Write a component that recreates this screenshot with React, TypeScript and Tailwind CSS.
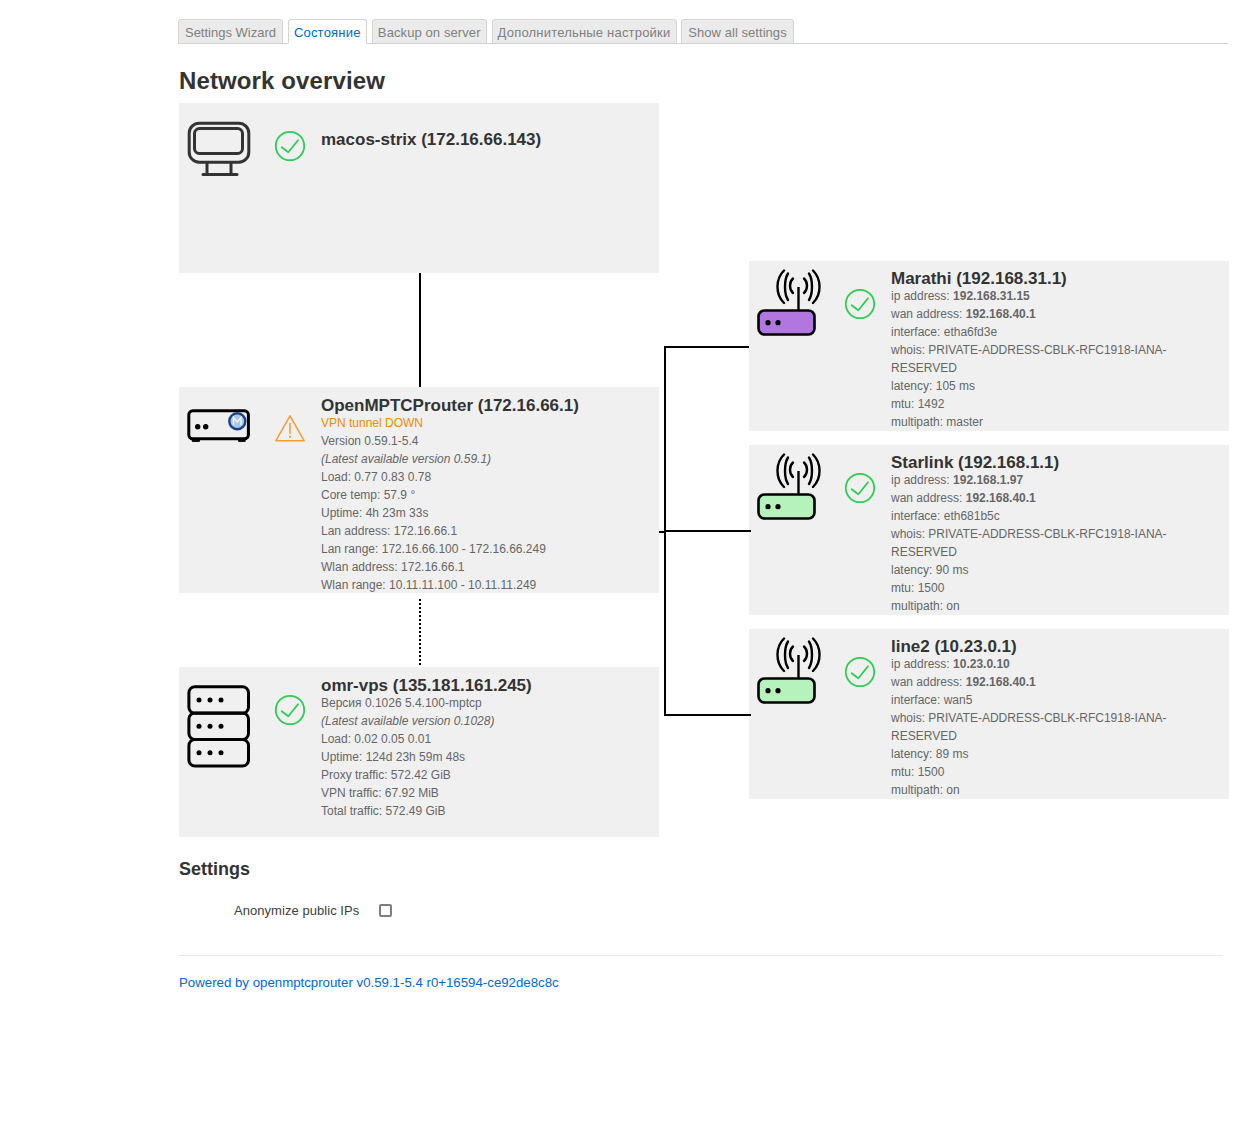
const font = { fontFamily: '"Liberation Sans", Arial, sans-serif' };

const tabs = [
  { label: "Settings Wizard", w: "w-[105px]" },
  { label: "Состояние", w: "w-[79.5px] tracking-[0.2px]", active: true },
  { label: "Backup on server", w: "w-[115.5px] tracking-[0.1px]" },
  { label: "Дополнительные настройки", w: "w-[185px] tracking-[0.2px]" },
  { label: "Show all settings", w: "w-[113px] tracking-[0.05px]" },
];

function CheckIcon() {
  return (
    <svg width="32" height="32" viewBox="0 0 32 32" fill="none" stroke="#2ecc55" strokeWidth="1.8" strokeLinecap="round" strokeLinejoin="round">
      <circle cx="16" cy="16" r="14.2" />
      <path d="M7.7 17.3 L14.3 22.3 L24 10.3" />
    </svg>
  );
}

function WarnIcon() {
  return (
    <svg width="32" height="32" viewBox="0 0 32 32" fill="none" stroke="#f39c33" strokeWidth="1.5" strokeLinejoin="round" strokeLinecap="round">
      <path d="M16 1.8 L30.2 26.8 H1.8 Z" />
      <path d="M16 9.5 V19.5" />
      <path d="M16 22.5 V23" strokeWidth="1.9" />
    </svg>
  );
}

function MonitorIcon() {
  return (
    <svg width="64" height="56" viewBox="0 0 64 56" fill="none" stroke="#333" strokeWidth="3" strokeLinecap="round" strokeLinejoin="round">
      <rect x="2.2" y="2.2" width="59.6" height="39" rx="10" />
      <rect x="7.5" y="7.5" width="48" height="25" rx="5" />
      <path d="M20 42 V53 M44 42 V53" strokeLinecap="butt" />
      <path d="M16 53.5 H50" />
    </svg>
  );
}

function RouterBoxIcon() {
  return (
    <svg width="64" height="34" viewBox="0 0 64 34" fill="none">
      <path d="M4.7 29 V32 Q4.7 33 6 33 H12 Q13 33 13 32 V29 Z M51 29 V32 Q51 33 52 33 H57.5 Q58.7 33 58.7 32 V29 Z" fill="#111" />
      <rect x="1.8" y="1.8" width="59.6" height="28" rx="4" stroke="#000" strokeWidth="3" fill="#f0f0f0" />
      <circle cx="10.7" cy="17.7" r="2.7" fill="#000" />
      <circle cx="18.7" cy="17.7" r="2.7" fill="#000" />
      <circle cx="50.3" cy="12.3" r="8" fill="#a9c6e6" stroke="#1b4382" strokeWidth="2.4" />
      <path d="M46.5 16 V8.5 L50.3 13 L54 8.5 V16" stroke="#eef4fb" strokeWidth="1.5" />
    </svg>
  );
}

function ServerIcon() {
  const rows = [1.7, 28, 54.5];
  return (
    <svg width="64" height="84" viewBox="0 0 64 84" fill="none">
      {rows.map((y) => (
        <g key={y}>
          <rect x="1.9" y={y} width="59.6" height="26.5" rx="6" stroke="#000" strokeWidth="3" />
          <circle cx="12" cy={y + 13.3} r="2.5" fill="#000" />
          <circle cx="23" cy={y + 13.3} r="2.5" fill="#000" />
          <circle cx="34" cy={y + 13.3} r="2.5" fill="#000" />
        </g>
      ))}
    </svg>
  );
}

function WifiRouterIcon({ fill }: { fill: string }) {
  return (
    <svg width="66" height="68" viewBox="0 0 66 68" fill="none" stroke="#000" strokeWidth="2.4" strokeLinecap="round">
      <path d="M41.5 18 V42" strokeLinecap="butt" />
      <path d="M36 9.5 C32 13 32 20.5 36 24" />
      <path d="M47 9.5 C51 13 51 20.5 47 24" />
      <path d="M31 4.5 C27 11 27 24.5 31 31" />
      <path d="M52 4.5 C56 11 56 24.5 52 31" />
      <path d="M27 1.5 C18.3 10 18.3 25.5 27 34" />
      <path d="M56 1.5 C64.7 10 64.7 25.5 56 34" />
      <rect x="1.5" y="41.5" width="56" height="24" rx="6" fill={fill} strokeWidth="2.6" />
      <circle cx="11" cy="53.7" r="2.6" fill="#000" stroke="none" />
      <circle cx="21" cy="53.7" r="2.6" fill="#000" stroke="none" />
    </svg>
  );
}

function Card({ icon, status, title, iconTop = "pt-[18px]", textTop = "pt-[9px]", children }: { icon: React.ReactNode; status: React.ReactNode; title: string; iconTop?: string; textTop?: string; children?: React.ReactNode }) {
  return (
    <div className="flex h-full w-[480px] bg-[#f0f0f0] pl-2">
      <div className={`w-[87px] shrink-0 ${iconTop}`}>{icon}</div>
      <div className="w-[47px] shrink-0 pt-[27px]">{status}</div>
      <div className={`w-[338px] shrink-0 ${textTop} text-[12px] leading-[18px] text-[#666]`}>
        <div className="-mb-[2px] text-[17px] font-bold leading-[20px] text-[#333]">{title}</div>
        {children}
      </div>
    </div>
  );
}

function WanCard({ name, fill, ip, wan, iface, latency, mtu, multipath }: { name: string; fill: string; ip: string; wan: string; iface: string; latency: string; mtu: string; multipath: string }) {
  return (
    <div className="h-[170px]">
      <Card icon={<WifiRouterIcon fill={fill} />} status={<CheckIcon />} title={name} iconTop="pt-[8px]" textTop="pt-[8px]">
        <div>ip address: <b>{ip}</b></div>
        <div>wan address: <b>{wan}</b></div>
        <div>interface: {iface}</div>
        <div>whois: PRIVATE-ADDRESS-CBLK-RFC1918-IANA-<br />RESERVED</div>
        <div>latency: {latency}</div>
        <div>mtu: {mtu}</div>
        <div>multipath: {multipath}</div>
      </Card>
    </div>
  );
}

export default function App() {
  return (
    <div style={font} className="min-h-[1145px] bg-white pl-[179px] pt-[19px] text-[#333]">
      <div className="-ml-px flex h-[25px] w-[1050px] items-start gap-[4.5px] border-b border-[#d4d4d4]">
        {tabs.map((t) => (
          <div
            key={t.label}
            className={`${t.w} flex h-[25px] shrink-0 items-center justify-center rounded-t-[3px] border border-[#d4d4d4] pt-[2px] text-[13px] ${
              t.active ? "border-b-white bg-white text-[#0069d6]" : "bg-[#ebebeb] text-[#808080]"
            }`}
          >
            {t.label}
          </div>
        ))}
      </div>

      <h2 className="mt-[23px] text-[24px] font-bold leading-[28px] tracking-[0.12px] text-[#333]">Network overview</h2>

      <div className="relative mt-[8px] flex h-[734px] w-[1050px] justify-between">
        <div className="flex w-[480px] flex-col">
          <div className="h-[170px]">
            <Card icon={<MonitorIcon />} status={<CheckIcon />} title="macos-strix (172.16.66.143)" textTop="pt-[27px]" />
          </div>
          <div className="ml-[240px] h-[114px] w-[2px] bg-black" />
          <div className="h-[206px]">
            <Card icon={<RouterBoxIcon />} status={<WarnIcon />} title="OpenMPTCProuter (172.16.66.1)" iconTop="pt-[22px]">
              <div className="text-[#f08a00]">VPN tunnel DOWN</div>
              <div>Version 0.59.1-5.4</div>
              <div><i>(Latest available version 0.59.1)</i></div>
              <div>Load: 0.77 0.83 0.78</div>
              <div>Core temp: 57.9 °</div>
              <div>Uptime: 4h 23m 33s</div>
              <div>Lan address: 172.16.66.1</div>
              <div>Lan range: 172.16.66.100 - 172.16.66.249</div>
              <div>Wlan address: 172.16.66.1</div>
              <div>Wlan range: 10.11.11.100 - 10.11.11.249</div>
            </Card>
          </div>
          <div className="ml-[240px] mt-[6px] h-[66px] w-0 border-l-2 border-dotted border-black" />
          <div className="mt-[2px] h-[170px]">
            <Card icon={<ServerIcon />} status={<CheckIcon />} title="omr-vps (135.181.161.245)">
              <div>Версия 0.1026 5.4.100-mptcp</div>
              <div><i>(Latest available version 0.1028)</i></div>
              <div>Load: 0.02 0.05 0.01</div>
              <div>Uptime: 124d 23h 59m 48s</div>
              <div>Proxy traffic: 572.42 GiB</div>
              <div>VPN traffic: 67.92 MiB</div>
              <div>Total traffic: 572.49 GiB</div>
            </Card>
          </div>
        </div>

        <div className="absolute left-[485px] top-[243px] h-[370px] w-[2px] bg-black" />
        <div className="absolute left-[485px] top-[243px] h-[2px] w-[85px] bg-black" />
        <div className="absolute left-[480px] top-[428px] h-[2px] w-[7px] bg-black" />
        <div className="absolute left-[485px] top-[427px] h-[2px] w-[87px] bg-black" />
        <div className="absolute left-[485px] top-[611px] h-[2px] w-[87px] bg-black" />

        <div className="mt-[158px] flex w-[480px] flex-col gap-[14px]">
          <WanCard name="Marathi (192.168.31.1)" fill="#b176e0" ip="192.168.31.15" wan="192.168.40.1" iface="etha6fd3e" latency="105 ms" mtu="1492" multipath="master" />
          <WanCard name="Starlink (192.168.1.1)" fill="#b6f2bb" ip="192.168.1.97" wan="192.168.40.1" iface="eth681b5c" latency="90 ms" mtu="1500" multipath="on" />
          <WanCard name="line2 (10.23.0.1)" fill="#b6f2bb" ip="10.23.0.10" wan="192.168.40.1" iface="wan5" latency="89 ms" mtu="1500" multipath="on" />
        </div>
      </div>

      <h3 className="mt-[21px] text-[18px] font-bold leading-[22px] text-[#333]">Settings</h3>

      <div className="mt-[21px] flex items-center pl-[55px] text-[13px] tracking-[0.05px] text-[#404040]">
        <span className="w-[145px]">Anonymize public IPs</span>
        <span className="h-[13px] w-[13px] rounded-[2px] border-2 border-[#7d7d8a] bg-white" />
      </div>

      <div className="mt-[34px] w-[1044px] border-t border-[#e8e8e8]" />
      <a className="mt-[19px] block text-[13.25px] leading-[16px] text-[#0069d6]">Powered by openmptcprouter v0.59.1-5.4 r0+16594-ce92de8c8c</a>
    </div>
  );
}
